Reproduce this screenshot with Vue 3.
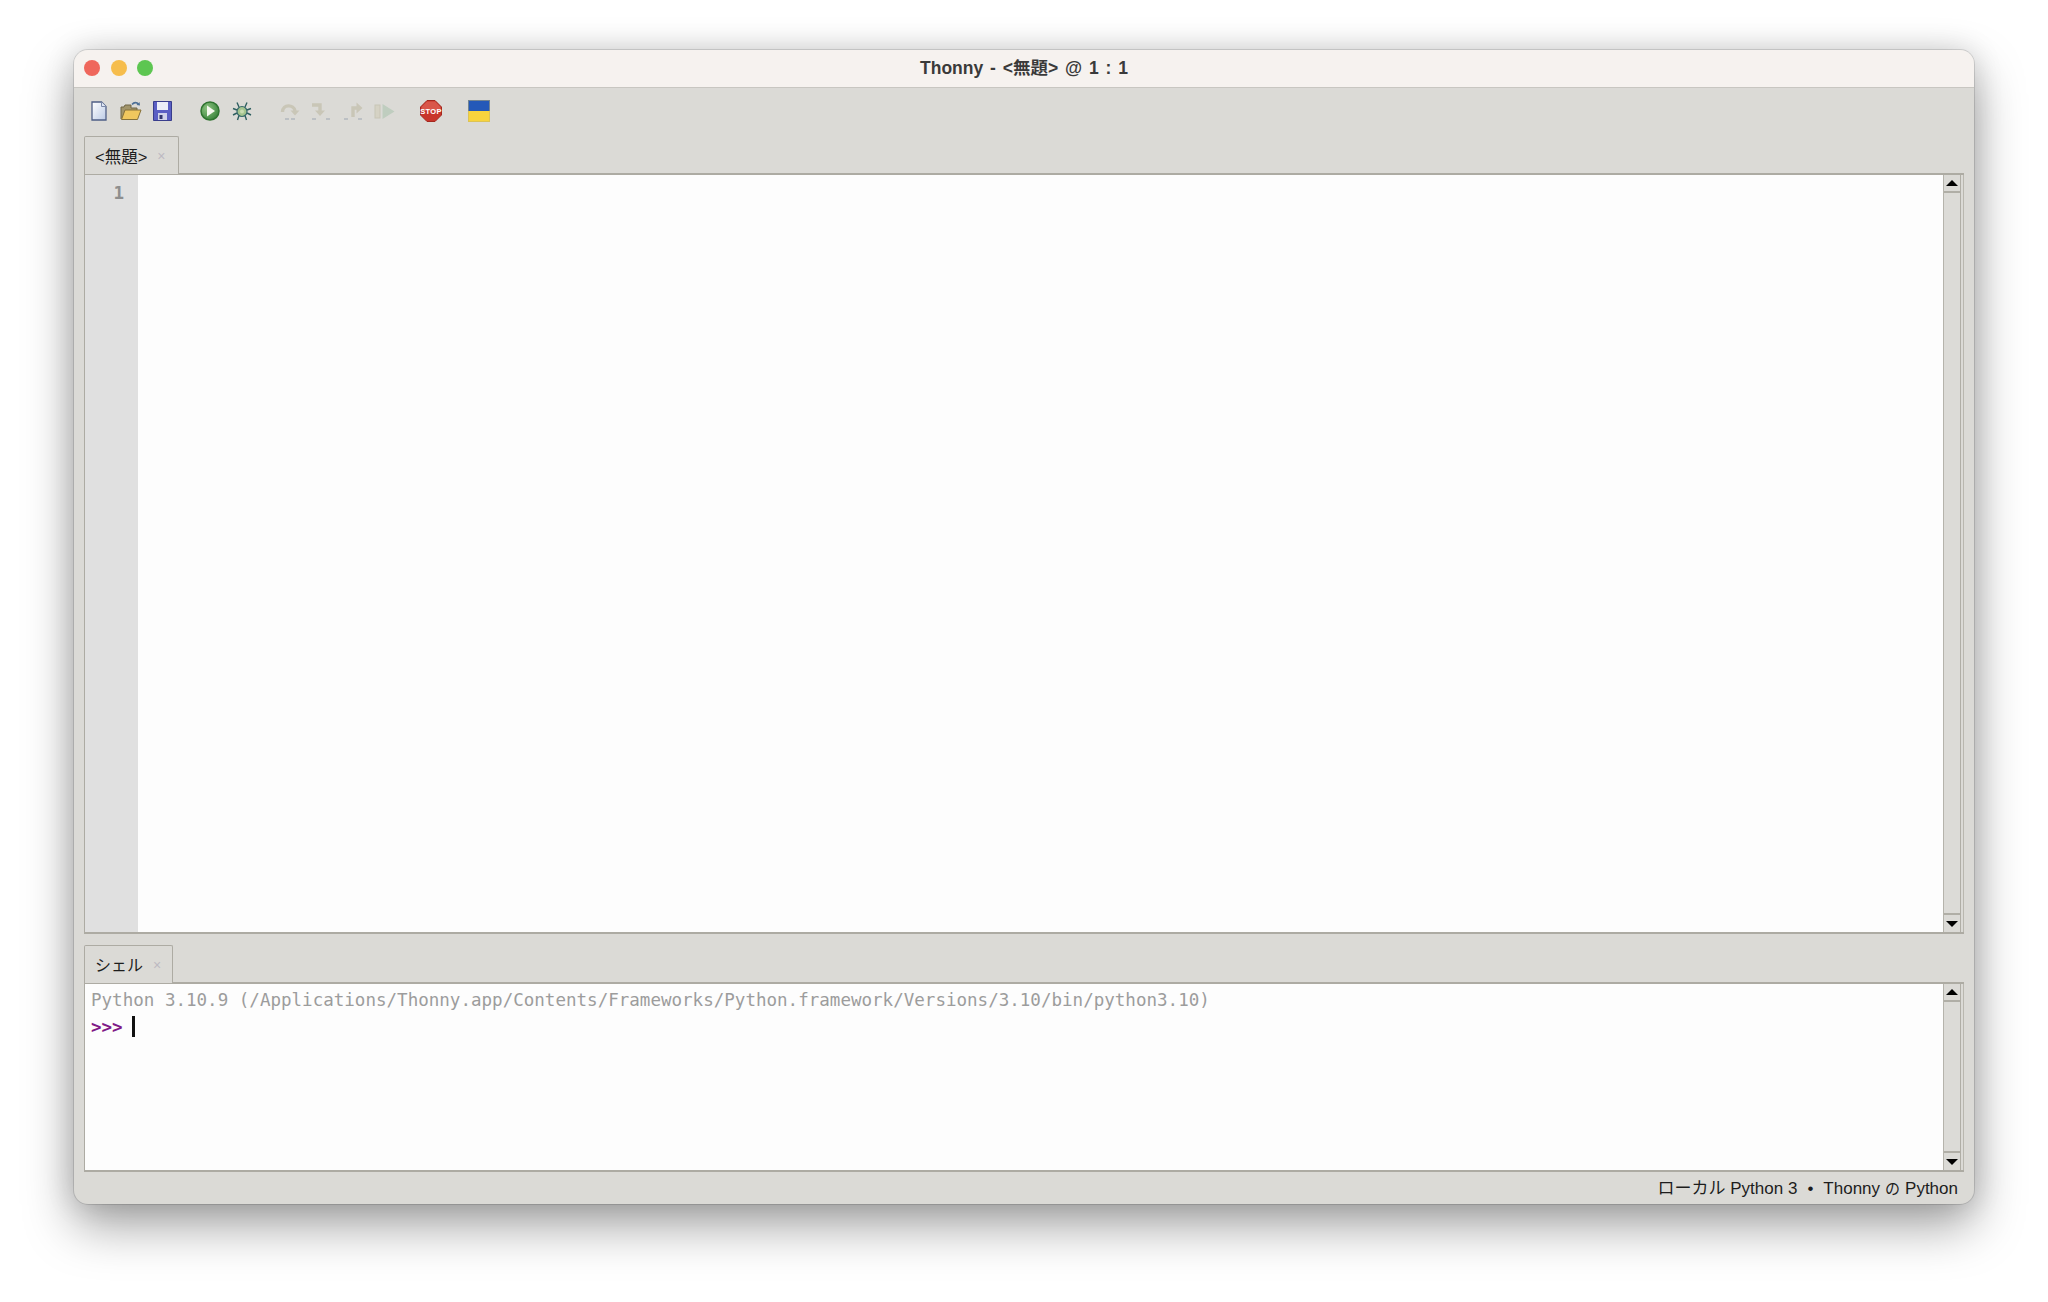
<script setup>
const shellLine = 'Python 3.10.9 (/Applications/Thonny.app/Contents/Frameworks/Python.framework/Versions/3.10/bin/python3.10)'
</script>

<template>
  <div class="page">
    <div class="window">
      <header class="titlebar">
        <div class="lights">
          <span class="light red"></span>
          <span class="light yellow"></span>
          <span class="light green"></span>
        </div>
        <div class="title">Thonny - &lt;無題&gt; @ 1 : 1</div>
      </header>

      <div class="toolbar">
        <svg class="ic new" width="16" height="20" viewBox="0 0 16 20">
          <defs>
            <linearGradient id="docfill" x1="0" y1="0" x2="1" y2="1">
              <stop offset="0" stop-color="#ffffff" />
              <stop offset="1" stop-color="#bccbe6" />
            </linearGradient>
          </defs>
          <path d="M1 1h9.500L15 5.500V19H1z" fill="url(#docfill)" stroke="#4f5f86" stroke-width="1.300" />
          <path d="M10.500 1v4.500H15" fill="#dfe6f4" stroke="#7a88a8" />
        </svg>
        <svg class="ic open" width="22" height="20" viewBox="0 0 22 20">
          <path d="M1 18V6h3l1-2h6v3h6v2" fill="#a1946a" stroke="#6f6545" />
          <path d="M1.500 18.500 5 9h16l-3.500 9.500z" fill="#f0c75e" stroke="#85713a" />
          <path d="M12 3.500c2-2.500 5-2.500 6.500 0" fill="none" stroke="#4d6f96" stroke-width="1.600" />
          <path d="m16.500 4 3.500 .5-.5-3.500z" fill="#4d6f96" />
        </svg>
        <svg class="ic save" width="19" height="20" viewBox="0 0 19 20">
          <path d="M.5 .5h18v19H.5z" fill="#5a5fc4" stroke="#393d8c" />
          <rect x="4" y="1" width="11" height="8" fill="#eceef8" />
          <rect x="5" y="12" width="9" height="7" fill="#cfd2ea" />
          <rect x="6.500" y="14" width="3" height="4" fill="#33376f" />
        </svg>
        <svg class="ic run" width="20" height="20" viewBox="0 0 20 20">
          <defs>
            <radialGradient id="runfill" cx=".35" cy=".35" r=".8">
              <stop offset="0" stop-color="#8cc27f" />
              <stop offset="1" stop-color="#2f7d33" />
            </radialGradient>
          </defs>
          <circle cx="10" cy="10" r="9" fill="url(#runfill)" stroke="#2f7430" stroke-width="1.500" />
          <path d="M7 4.500v11l8-5.500z" fill="#f4f8ee" />
        </svg>
        <svg class="ic bug" width="20" height="20" viewBox="0 0 20 20">
          <g stroke="#2e5f60" stroke-width="1.400" fill="none">
            <path d="M7 6 5 1.500M13 6l2-4.500M5 9 1 7.500M15 9l4-1.500M5 12l-4 2M15 12l4 2M7 14.500 5.500 19M13 14.500l1.500 4.500" />
          </g>
          <ellipse cx="10" cy="10.500" rx="5" ry="5" fill="#a4c48f" stroke="#37696a" stroke-width="1.200" />
          <circle cx="10" cy="10.500" r="2" fill="#c9dcb1" />
        </svg>
        <svg class="ic over" width="20" height="20" viewBox="0 0 20 20">
          <path d="M2.500 11C2.500 3 14 3 15 10" fill="none" stroke="#c9c6b7" stroke-width="3.400" />
          <path d="m10.500 9.500 4.500 5 4.500-5z" fill="#c9c6b7" />
          <path d="M5 18h4M11 18h4" stroke="#bcc0c4" stroke-width="2" />
        </svg>
        <svg class="ic into" width="20" height="20" viewBox="0 0 20 20">
          <path d="M1 4h8v6" fill="none" stroke="#c9c6b7" stroke-width="3.400" />
          <path d="m4 9.500 5 5.500 5-5.500z" fill="#c9c6b7" />
          <path d="M1 18h4M15 18h4" stroke="#bcc0c4" stroke-width="2" />
        </svg>
        <svg class="ic out" width="20" height="20" viewBox="0 0 20 20">
          <path d="M10 16V7h4" fill="none" stroke="#c9c6b7" stroke-width="3.400" />
          <path d="m13.500 1.500 6 5.500-6 5.500z" fill="#c9c6b7" />
          <path d="M1 18h4M15 18h4" stroke="#bcc0c4" stroke-width="2" />
        </svg>
        <svg class="ic resume" width="21" height="20" viewBox="0 0 21 20">
          <rect x="1" y="4" width="5" height="13" fill="#d5d2c4" stroke="#c8c5b6" />
          <path d="M8.500 3v15L20.500 10.500z" fill="#bfcdbf" />
        </svg>
        <svg class="ic stop" width="22" height="22" viewBox="0 0 22 22">
          <path d="M7 .5h8L21.500 7v8L15 21.500H7L.5 15V7z" fill="#c9352b" stroke="#a3281f" />
          <path d="M7 1.500h8L20.500 7v4h-19V7z" fill="#d9564a" />
          <text class="stoptext" x="11" y="14">STOP</text>
        </svg>
        <svg class="ic flag" width="22" height="22" viewBox="0 0 22 22">
          <rect width="22" height="11" fill="#2459b8" />
          <rect y="11" width="22" height="11" fill="#f8d43d" />
          <rect x=".5" y=".5" width="21" height="21" fill="none" stroke="#c2b26b" stroke-opacity=".5" />
        </svg>
      </div>

      <div class="tabs">
        <div class="tab tab-editor">&lt;無題&gt;<span class="close">×</span></div>
      </div>
      <section class="pane editor">
        <div class="gutter">1</div>
        <div class="textarea"></div>
        <div class="scrollbar">
          <div class="sb-btn"><span class="up"></span></div>
          <div class="sb-track"></div>
          <div class="sb-btn"><span class="down"></span></div>
        </div>
      </section>

      <div class="tabs shell-tabs">
        <div class="tab tab-shell"><span class="shell-label">シェル</span><span class="close">×</span></div>
      </div>
      <section class="pane shell">
        <div class="textarea console">
          <div class="line banner">{{ shellLine }}</div>
          <div class="line prompt"><b>&gt;&gt;&gt;</b><i class="caret"></i></div>
        </div>
        <div class="scrollbar">
          <div class="sb-btn"><span class="up"></span></div>
          <div class="sb-track"></div>
          <div class="sb-btn"><span class="down"></span></div>
        </div>
      </section>

      <footer class="status">
        <span>ローカル Python 3</span><span class="sep">•</span><span>Thonny</span><span class="no">の</span><span>Python</span>
      </footer>
    </div>
  </div>
</template>

<style>
html, body { margin: 0; background: #fff; }
</style>

<style scoped>
.page {
  width: 2048px;
  height: 1302px;
  box-sizing: border-box;
  padding: 50px 74px 98px;
  background: #fff;
  overflow: hidden;
}
.window {
  height: 1154px;
  box-sizing: border-box;
  display: flex;
  flex-direction: column;
  background: #dbdad6;
  border-radius: 14px;
  box-shadow: 0 0 0 1px rgba(0,0,0,.12), 0 22px 50px rgba(0,0,0,.36), 0 0 30px rgba(0,0,0,.14);
  overflow: hidden;
  font-family: "Liberation Sans", "Noto Sans CJK JP", sans-serif;
  color: #1c1c1c;
}
.titlebar {
  height: 37px;
  flex: none;
  position: relative;
  display: flex;
  align-items: center;
  justify-content: center;
  background: #f6f2ef;
  border-bottom: 1px solid #c8c6c1;
}
.lights {
  position: absolute;
  left: 10px;
  top: 10px;
  display: flex;
  gap: 10.500px;
}
.light { width: 16px; height: 16px; border-radius: 50%; }
.red { background: #ef675c; }
.yellow { background: #f6bd4c; }
.green { background: #5dc651; }
.title {
  font-size: 17.500px;
  line-height: 20px;
  margin-top: -1px;
  font-weight: 700;
  color: #3a3a3a;
  word-spacing: 2px;
}
.toolbar {
  height: 48px;
  flex: none;
  display: flex;
  align-items: center;
  padding: 0 0 2px 17px;
  box-sizing: border-box;
}
.ic { flex: none; display: block; }
.new { margin-right: 13px; }
.open { margin-right: 11px; }
.save { margin-right: 28px; }
.run { margin-right: 12px; }
.bug { margin-right: 28px; }
.over { margin-right: 11px; }
.into { margin-right: 12px; }
.out { margin-right: 11px; }
.resume { margin-right: 25px; }
.stop { margin-right: 25px; }
.flag { margin-top: -1px; margin-left: 1px; }
.stoptext {
  font-family: "Liberation Sans", sans-serif;
  font-size: 7.500px;
  font-weight: 700;
  fill: #fff;
  text-anchor: middle;
  letter-spacing: .3px;
}
.tabs {
  height: 37px;
  flex: none;
  display: flex;
  padding-left: 10px;
}
.shell-tabs { margin-top: 11px; }
.tab {
  box-sizing: border-box;
  height: 38px;
  position: relative;
  z-index: 1;
  display: flex;
  align-items: center;
  padding-left: 10px;
  background: #dbdad6;
  border: 1px solid #adaba3;
  border-bottom: 0;
  border-radius: 2px 2px 0 0;
  font-size: 16.500px;
  color: #1d1d1d;
}
.tab-editor { width: 95px; }
.tab-shell { width: 89px; }
.shell-label { font-size: 16px; margin-top: -2px; }
.close {
  margin-left: 10px;
  font-size: 14px;
  color: #bdb9c2;
}
.pane {
  margin: 0 10px;
  flex: none;
  display: flex;
  box-sizing: border-box;
  background: #fdfdfd;
  border-top: 2px solid #adaba3;
  border-left: 1px solid #adaba3;
  border-bottom: 2px solid #adaba3;
}
.editor { height: 761px; }
.shell { height: 190px; }
.gutter {
  width: 53px;
  flex: none;
  box-sizing: border-box;
  padding: 8px 14px 0 0;
  text-align: right;
  background: #e0e0e0;
  color: #8e8e8e;
  font: 700 17.550px "DejaVu Sans Mono", monospace;
}
.textarea { flex: 1; min-width: 0; background: #fdfdfd; }
.console {
  padding: 3px 0 0 6px;
  font: 17.550px/27px "DejaVu Sans Mono", monospace;
}
.line { white-space: pre; height: 27px; display: flex; align-items: center; }
.banner { color: #9c9c9c; }
.prompt b { color: #7f1a87; font-weight: 700; }
.caret {
  display: block;
  width: 2.500px;
  height: 21px;
  margin-left: 9.500px;
  background: #111;
  margin-top: -2px;
}
.scrollbar {
  width: 21px;
  flex: none;
  box-sizing: border-box;
  display: flex;
  flex-direction: column;
  background: #dbdad6;
  border-left: 1px solid #b5b3ab;
  border-right: 1px solid #b9b7af;
  padding: 0 3px 1px 0;
  box-shadow: inset -2px 0 0 #dbdad6, inset -3px 0 0 #b0aea6;
}
.sb-btn {
  height: 15px;
  flex: none;
  display: flex;
  align-items: center;
  justify-content: center;
}
.sb-track {
  flex: 1;
  margin: 1px 0;
  background: #dcdbd7;
  border-top: 2px solid #b0aea6;
  border-bottom: 2px solid #b0aea6;
}
.up, .down {
  width: 0;
  height: 0;
  border-left: 6px solid transparent;
  border-right: 6px solid transparent;
}
.up { border-bottom: 6px solid #000; }
.down { border-top: 6px solid #000; }
.status {
  flex: 1;
  display: flex;
  align-items: baseline;
  justify-content: flex-end;
  padding: 7px 16px 0 0;
  font-size: 17px;
  line-height: 20px;
  color: #1d1d1d;
  white-space: pre;
}
.sep { margin: 0 10px; }
.no { margin: 0 5px; font-size: 15px; }
</style>
